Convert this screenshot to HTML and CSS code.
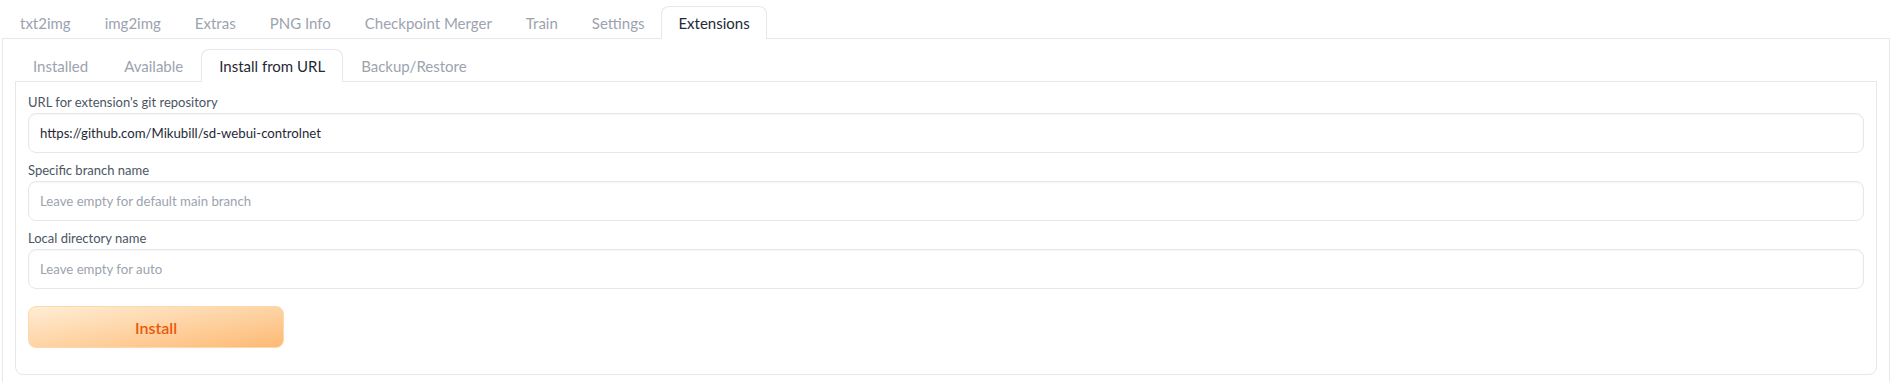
FILE: index.html
```html
<!DOCTYPE html>
<html lang="en">
<head>
  <meta charset="UTF-8" />
  <title>Extensions</title>
  <link rel="stylesheet" href="styles.css">
</head>
<body>
  <div class="app">
    <div class="tab-nav main-nav">
      <button class="tab">txt2img</button>
      <button class="tab">img2img</button>
      <button class="tab">Extras</button>
      <button class="tab">PNG Info</button>
      <button class="tab">Checkpoint Merger</button>
      <button class="tab">Train</button>
      <button class="tab">Settings</button>
      <button class="tab selected">Extensions</button>
    </div>

    <div class="panel">
      <div class="tab-nav">
        <button class="tab">Installed</button>
        <button class="tab">Available</button>
        <button class="tab selected">Install from URL</button>
        <button class="tab">Backup/Restore</button>
      </div>

      <div class="tab-body">
        <div class="field">
          <label for="git-url">URL for extension's git repository</label>
          <input type="text" id="git-url" value="https://github.com/Mikubill/sd-webui-controlnet" />
        </div>

        <div class="field">
          <label for="branch">Specific branch name</label>
          <input type="text" id="branch" placeholder="Leave empty for default main branch" />
        </div>

        <div class="field">
          <label for="dirname">Local directory name</label>
          <input type="text" id="dirname" placeholder="Leave empty for auto" />
        </div>

        <button class="primary">Install</button>
      </div>
    </div>
  </div>
</body>
</html>
```

FILE: styles.css
```css
html, body {
  margin: 0;
  overflow: hidden;
  background: #fff;
}
body {
  font-family: 'Lato', 'Liberation Sans', sans-serif;
  color: #1f2937;
}
.app {
  padding: 6px 4px 0 2px;
}
.tab-nav {
  display: flex;
  height: 32px;
}
.tab {
  position: relative;
  z-index: 1;
  height: 32px;
  padding: 0 17px;
  background: none;
  border: 1px solid transparent;
  border-bottom: none;
  font-family: inherit;
  font-size: 15px;
  color: #9ca3af;
  cursor: pointer;
}
.main-nav .tab {
  padding: 0 16px;
}
.main-nav .tab:first-child {
  padding-left: 17px;
}
.tab.selected {
  height: 33px;
  background: #fff;
  border-color: #e5e7eb;
  border-radius: 8px 8px 0 0;
  color: #1f2937;
}
.panel {
  border: 1px solid #e5e7eb;
  padding: 10px 12px 30px;
}
.tab-body {
  border: 1px solid #e5e7eb;
  border-radius: 0 0 8px 8px;
  padding: 10px 12px 26px;
}
.field {
  margin-bottom: 7px;
}
label {
  display: block;
  font-size: 13px;
  line-height: 20px;
  color: #4b5563;
  margin-bottom: 1px;
}
input[type="text"] {
  display: block;
  box-sizing: border-box;
  width: 100%;
  height: 40px;
  padding: 0 11px;
  border: 1px solid #e5e7eb;
  border-radius: 8px;
  box-shadow: 0 1px 2px rgba(0, 0, 0, 0.04) inset;
  font-family: inherit;
  font-size: 13.2px;
  color: #1f2937;
  outline: none;
}
input::placeholder {
  color: #9ca3af;
}
.primary {
  display: block;
  width: 256px;
  height: 42px;
  margin-top: 17px;
  border: 1px solid #fed7aa;
  border-radius: 8px;
  background: linear-gradient(to bottom right, #ffedd5, #fdba74);
  color: #ea580c;
  font-family: inherit;
  font-size: 16px;
  font-weight: 600;
  cursor: pointer;
}
```
